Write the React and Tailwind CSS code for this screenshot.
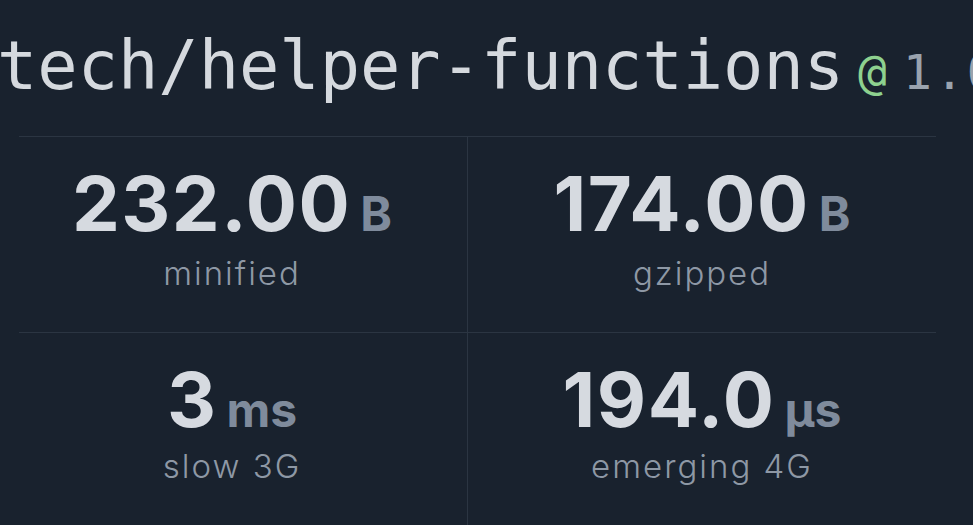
import React from "react";

const stats = [
  [
    { value: "232.00", unit: "B", label: "minified" },
    { value: "174.00", unit: "B", label: "gzipped" },
  ],
  [
    { value: "3", unit: "ms", label: "slow 3G" },
    { value: "194.0", unit: "µs", label: "emerging 4G" },
  ],
];

function Stat({ stat, left, last }) {
  return (
    <div
      className={
        left
          ? "w-[449px] h-[195px] border-r border-[#2b3542] pr-[22px] flex flex-col items-center pt-[28px]"
          : "w-[468px] h-[195px] flex flex-col items-center pt-[28px]"
      }
    >
      <div className="flex items-baseline leading-none">
        <span className="text-[76px] font-bold text-[#d6dae0] tracking-[1.5px]">{stat.value}</span>
        <span className="ml-[9px] text-[48px] font-bold text-[#7f8b9c]">{stat.unit}</span>
      </div>
      <div
        className={
          last
            ? "mt-[13px] text-[33px] leading-none font-light tracking-[2px] text-[#8e98a5]"
            : "mt-[16px] text-[33px] leading-none font-light tracking-[2px] text-[#8e98a5]"
        }
      >
        {stat.label}
      </div>
    </div>
  );
}

export default function App() {
  return (
    <div
      className="w-[973px] h-[525px] overflow-hidden bg-[#19222e]"
      style={{ fontFamily: "Inter, 'Noto Sans', sans-serif" }}
    >
      <div
        className="pt-[33px] whitespace-nowrap leading-none flex items-baseline"
        style={{ fontFamily: "'DejaVu Sans Mono', 'Liberation Mono', monospace" }}
      >
        <span className="text-[67px] text-[#d5d9de] ml-[-3px]">tech/helper-functions</span>
        <span className="ml-[14px] text-[48px] text-[#8ed18f]">@</span>
        <span className="ml-[16px] text-[48px] text-[#9aa3ae] tracking-[3px]">1.0.0</span>
      </div>
      <div className="mt-[36px] ml-[19px] w-[917px] border-t border-[#2b3542]">
        {stats.map((row, i) => (
          <div key={i} className={i === 0 ? "flex border-b border-[#2b3542]" : "flex"}>
            <Stat stat={row[0]} left last={i === 1} />
            <Stat stat={row[1]} last={i === 1} />
          </div>
        ))}
      </div>
    </div>
  );
}
